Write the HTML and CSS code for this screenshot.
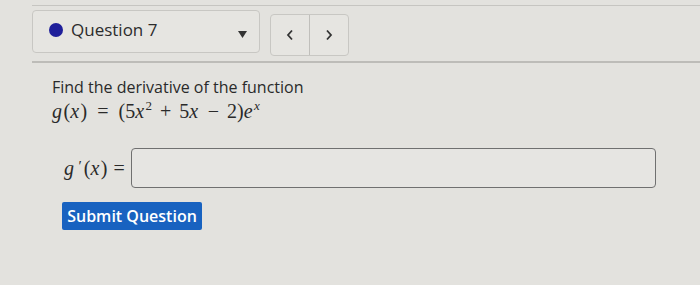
FILE: index.html
```html
<!DOCTYPE html>
<html>
<head>
<meta charset="utf-8">
<link rel="stylesheet" href="styles.css">
</head>
<body>
<div class="header">
  <div class="select">
    <span class="dot"></span>
    <span class="qlabel">Question 7</span>
    <svg class="caret" width="9" height="7" viewBox="0 0 9 7"><path d="M0 0 H9 L4.5 7 Z" fill="#333"/></svg>
  </div>
  <div class="nav">
    <div class="navbtn"><svg width="8" height="12" viewBox="0 0 8 12"><path d="M6 1.5 L2 6 L6 10.5" fill="none" stroke="#333" stroke-width="1.8"/></svg></div>
    <div class="navbtn"><svg width="8" height="12" viewBox="0 0 8 12"><path d="M2 1.5 L6 6 L2 10.5" fill="none" stroke="#333" stroke-width="1.8"/></svg></div>
  </div>
</div>
<div class="content">
  <p class="prompt">Find the derivative of the function</p>
  <p class="math"><i>g</i>(<i>x</i>)<span class="rel">=</span>(5<i>x</i><sup>2</sup><span class="op">+</span>5<i>x</i><span class="op">−</span>2)<i>e</i><sup><i>x</i></sup></p>
  <div class="answer">
    <span class="math lhs"><i>g</i><span class="prime">′</span>(<i>x</i>)<span class="rel lrel">=</span></span>
    <div class="input"></div>
  </div>
  <div class="submit">Submit Question</div>
</div>
</body>
</html>
```
FILE: styles.css
```css
html, body {
  margin: 0;
  padding: 0;
}
body {
  width: 700px;
  height: 285px;
  overflow: hidden;
  background: #e3e2de;
  font-family: "Open Sans", "DejaVu Sans", sans-serif;
  color: #2b2b2b;
}
.header {
  margin-left: 32px;
  margin-top: 5px;
  border-top: 1px solid #c6c5c1;
  border-bottom: 2px solid #bdbcb8;
  padding: 4px 0 5px 0;
  display: flex;
  align-items: flex-start;
}
.select {
  box-sizing: border-box;
  width: 228px;
  height: 43px;
  border: 1px solid #c8c7c3;
  border-radius: 4px;
  background: #e6e5e1;
  display: flex;
  align-items: center;
  padding-left: 16px;
  padding-right: 12px;
  padding-bottom: 4px;
}
.dot {
  width: 14px;
  height: 14px;
  border-radius: 50%;
  background: #1f1f9a;
  flex: none;
}
.qlabel {
  margin-left: 8px;
  font-size: 17px;
  color: #2c2c2c;
  flex: 1;
}
.caret {
  margin-top: 10px;
}
.nav {
  margin-left: 10px;
  margin-top: 4px;
  display: flex;
  border: 1px solid #c8c7c3;
  border-radius: 4px;
  background: #e6e5e1;
}
.navbtn {
  width: 38px;
  height: 40px;
  display: flex;
  align-items: center;
  justify-content: center;
}
.navbtn + .navbtn {
  border-left: 1px solid #c0bfbb;
}
.content {
  padding-left: 52px;
  padding-top: 14px;
}
.prompt {
  margin: 0;
  font-size: 16px;
  line-height: 20px;
  color: #2a2a2a;
}
.math {
  font-family: "Liberation Serif", "DejaVu Serif", serif;
  font-size: 20px;
  color: #2a2a2a;
  white-space: nowrap;
}
.math i {
  padding-right: 1.5px;
}
p.math {
  margin: 3px 0 0 0;
  line-height: 22px;
}
.math sup {
  font-size: 13px;
  line-height: 0;
}
.rel {
  margin: 0 10px;
}
.op {
  margin: 0 8px;
}
.prime {
  font-size: 15px;
  margin: 0 2px 0 3px;
  position: relative;
  top: -4px;
}
.answer {
  display: flex;
  align-items: center;
  width: 604px;
  margin-top: 26px;
}
.lhs {
  margin-left: 12px;
  flex: none;
}
.lrel {
  margin: 0 0 0 6px;
}
.input {
  flex: 1;
  margin-left: 6px;
  box-sizing: border-box;
  height: 40px;
  border: 1.5px solid #707070;
  border-radius: 4px;
  background: #e6e5e2;
}
.submit {
  margin-top: 14px;
  margin-left: 10px;
  width: 140px;
  height: 28px;
  box-sizing: border-box;
  background: #1862c0;
  border-radius: 2px;
  color: #fff;
  font-weight: 600;
  font-size: 16px;
  display: flex;
  align-items: center;
  justify-content: center;
}
```
